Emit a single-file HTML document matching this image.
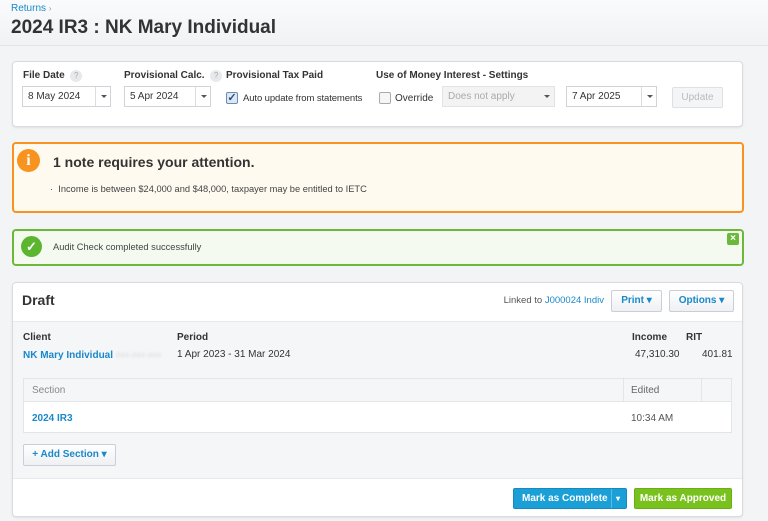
<!DOCTYPE html>
<html><head><style>
*{box-sizing:border-box;margin:0;padding:0}
body{width:768px;height:521px;background:#f3f4f6;font-family:"Liberation Sans",Arial,sans-serif;font-size:10px;color:#333;position:relative;overflow:hidden}
.a{position:absolute}
.hdr{left:0;top:0;width:768px;height:46px;background:linear-gradient(#fafbfc,#f1f2f4);border-bottom:1px solid #e2e4e7}
.panel{background:#fff;border:1px solid #d8dbdf;border-radius:4px;box-shadow:0 1px 2px rgba(0,0,0,.08)}
.lbl{font-weight:bold;font-size:10px;color:#333}
.inp{background:#fff;border:1px solid #d0d3d7;height:21px;font-size:10px;padding:4px 5px}
.dd{position:absolute;right:0;top:0;width:15px;height:19px;border-left:1px solid #dcdcdc}
.dd:after{content:"";position:absolute;left:5px;top:8px;border:3px solid transparent;border-top:3px solid #555}
.q{display:inline-block;width:12px;height:12px;border-radius:6px;background:#e8e9eb;color:#aaa;font-size:8px;text-align:center;line-height:12px;font-weight:normal}
.btn{border:1px solid #ccd;border-radius:2px;background:linear-gradient(#fff,#eef0f2);color:#1a88c9;font-weight:bold;font-size:10px;text-align:center;line-height:20px}
.blue{color:#1a88c9}
</style></head><body>
<div class="a hdr"></div>
<div class="a blue" style="left:11px;top:3px;font-size:10px">Returns <span style="color:#999;font-size:8px">›</span></div>
<div class="a" style="left:11px;top:17px;font-size:19px;font-weight:bold;color:#333">2024 IR3 : NK Mary Individual</div>

<div class="a panel" style="left:12px;top:61px;width:731px;height:66px"></div>
<div class="a lbl" style="left:23px;top:70px">File Date &nbsp;<span class="q">?</span></div>
<div class="a inp" style="left:22px;top:86px;width:89px">8 May 2024<div class="dd"></div></div>
<div class="a lbl" style="left:124px;top:70px">Provisional Calc. &nbsp;<span class="q">?</span></div>
<div class="a inp" style="left:124px;top:86px;width:87px">5 Apr 2024<div class="dd"></div></div>
<div class="a lbl" style="left:226px;top:70px">Provisional Tax Paid</div>
<div class="a" style="left:226px;top:92px;width:12px;height:12px;border:1px solid #6a8db5;background:#dbe7f3;border-radius:2px;color:#2a4f7a;font-size:11px;line-height:10px;text-align:center;font-weight:bold">✓</div>
<div class="a" style="left:243px;top:93px;font-size:9.5px;letter-spacing:-0.1px">Auto update from statements</div>
<div class="a lbl" style="left:376px;top:70px">Use of Money Interest - Settings</div>
<div class="a" style="left:379px;top:92px;width:12px;height:12px;border:1px solid #aaa;border-radius:2px;background:#f6f6f6"></div>
<div class="a" style="left:395px;top:93px">Override</div>
<div class="a inp" style="left:442px;top:86px;width:113px;background:#f3f3f3;color:#aaa;border-color:#e3e3e3">Does not apply<div class="dd" style="border:none"></div></div>
<div class="a inp" style="left:566px;top:86px;width:91px">7 Apr 2025<div class="dd"></div></div>
<div class="a btn" style="left:672px;top:87px;width:51px;height:21px;color:#bbb;font-weight:normal;background:#f4f5f6;border-color:#e0e0e0">Update</div>

<div class="a" style="left:12px;top:142px;width:732px;height:71px;border:2px solid #f7931e;border-radius:4px;background:#fffaf0"></div>
<div class="a" style="left:17px;top:149px;width:23px;height:23px;border-radius:12px;background:#f7931e;color:#fff;font-weight:bold;font-size:16px;text-align:center;line-height:23px;font-family:'Liberation Serif',serif">i</div>
<div class="a" style="left:53px;top:154px;font-size:14px;font-weight:bold;color:#333">1 note requires your attention.</div>
<div class="a" style="left:50px;top:184px;font-size:9.3px;color:#444">· &nbsp;Income is between $24,000 and $48,000, taxpayer may be entitled to IETC</div>

<div class="a" style="left:12px;top:229px;width:732px;height:37px;border:2px solid #6cb83a;border-radius:4px;background:#f5faf0"></div>
<div class="a" style="left:21px;top:236px;width:21px;height:21px;border-radius:11px;background:#5cb52e;color:#fff;font-size:13px;text-align:center;line-height:21px;font-weight:bold">✓</div>
<div class="a" style="left:53px;top:242px;font-size:9.3px;color:#444">Audit Check completed successfully</div>
<div class="a" style="left:727px;top:233px;width:12px;height:12px;background:#6cb83a;border-radius:2px;color:#fff;font-size:10px;text-align:center;line-height:12px;font-weight:bold">×</div>

<div class="a panel" style="left:12px;top:282px;width:731px;height:235px;overflow:hidden">
 <div class="a" style="left:0;top:38px;width:731px;height:158px;background:#f5f6f8;border-top:1px solid #e8e9eb;border-bottom:1px solid #e8e9eb"></div>
</div>
<div class="a" style="left:22px;top:292px;font-size:14px;font-weight:bold;color:#333">Draft</div>
<div class="a" style="left:440px;width:164px;text-align:right;top:295px;color:#555;font-size:9.5px">Linked to <span class="blue">J000024 Indiv</span></div>
<div class="a btn" style="left:611px;top:290px;width:51px;height:22px">Print ▾</div>
<div class="a btn" style="left:669px;top:290px;width:65px;height:22px">Options ▾</div>
<div class="a lbl" style="left:23px;top:332px">Client</div>
<div class="a lbl" style="left:177px;top:332px">Period</div>
<div class="a lbl" style="left:632px;top:332px">Income</div>
<div class="a lbl" style="left:686px;top:332px">RIT</div>
<div class="a blue" style="left:23px;top:350px;font-weight:bold">NK Mary Individual <span style="color:#ddd;font-weight:normal;font-size:8px;filter:blur(1px)">###-###-###</span></div>
<div class="a" style="left:177px;top:349px">1 Apr 2023 - 31 Mar 2024</div>
<div class="a" style="left:635px;top:349px">47,310.30</div>
<div class="a" style="left:702px;top:349px">401.81</div>

<div class="a" style="left:23px;top:378px;width:709px;height:55px;border:1px solid #e3e5e8;background:#fff">
 <div class="a" style="left:0;top:0;width:707px;height:23px;background:#f5f6f8;border-bottom:1px solid #e3e5e8"></div>
 <div class="a" style="left:599px;top:0;width:1px;height:23px;background:#e3e5e8"></div>
 <div class="a" style="left:677px;top:0;width:1px;height:23px;background:#e3e5e8"></div>
 <div class="a" style="left:8px;top:6px;color:#888">Section</div>
 <div class="a" style="left:607px;top:6px;color:#666">Edited</div>
 <div class="a blue" style="left:8px;top:34px;font-weight:bold">2024 IR3</div>
 <div class="a" style="left:607px;top:34px;color:#555">10:34 AM</div>
</div>
<div class="a btn" style="left:23px;top:444px;width:93px;height:22px">+ Add Section ▾</div>

<div class="a" style="left:513px;top:488px;width:114px;height:21px;background:#1b9fd7;border:1px solid #168ac0;border-radius:2px;color:#fff;font-weight:bold;line-height:19px;padding-left:8px">Mark as Complete<span class="a" style="left:97px;top:0;width:1px;height:19px;background:#5cbbe5"></span><span class="a" style="left:102px;top:0;font-size:8px">▾</span></div>
<div class="a" style="left:634px;top:488px;width:98px;height:21px;background:#79c21e;border:1px solid #6aad18;border-radius:2px;color:#fff;font-weight:bold;line-height:19px;text-align:center">Mark as Approved</div>
</body></html>
